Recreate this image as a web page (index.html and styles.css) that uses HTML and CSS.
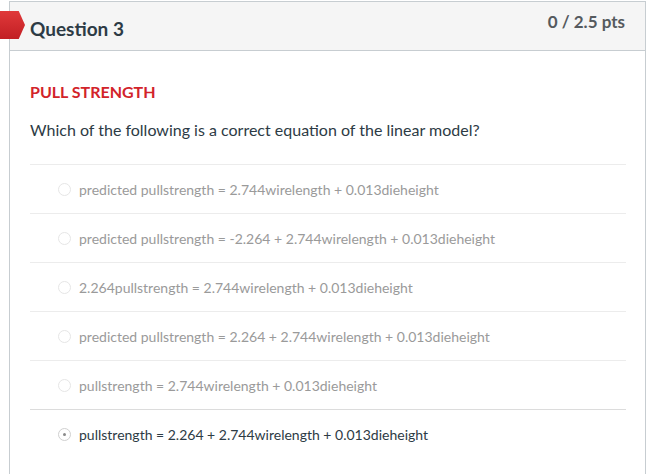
FILE: index.html
```html
<!DOCTYPE html>
<html lang="en">
<head>
<meta charset="utf-8">
<title>Question 3</title>
<link rel="stylesheet" href="styles.css">
</head>
<body>
<div class="card">
  <div class="header">
    <span class="flag"></span>
    <h2 class="title">Question 3</h2>
    <div class="pts">0 / 2.5 pts</div>
  </div>
  <div class="content">
    <p class="label">PULL STRENGTH</p>
    <p class="question">Which of the following is a correct equation of the linear model?</p>
    <ul class="answers">
      <li class="answer"><span class="radio"></span><span class="text">predicted pullstrength = 2.744wirelength + 0.013dieheight</span></li>
      <li class="answer"><span class="radio"></span><span class="text">predicted pullstrength = -2.264 + 2.744wirelength + 0.013dieheight</span></li>
      <li class="answer"><span class="radio"></span><span class="text">2.264pullstrength = 2.744wirelength + 0.013dieheight</span></li>
      <li class="answer"><span class="radio"></span><span class="text">predicted pullstrength = 2.264 + 2.744wirelength + 0.013dieheight</span></li>
      <li class="answer"><span class="radio"></span><span class="text">pullstrength = 2.744wirelength + 0.013dieheight</span></li>
      <li class="answer selected"><span class="radio"></span><span class="text">pullstrength = 2.264 + 2.744wirelength + 0.013dieheight</span></li>
    </ul>
  </div>
</div>
</body>
</html>
```

FILE: styles.css
```css
html, body {
  margin: 0;
  padding: 0;
  background: #ffffff;
}

body {
  font-family: Lato, "Open Sans", "Liberation Sans", sans-serif;
  color: #2d3b45;
}

.card {
  margin: 1px 0 0 9px;
  width: 637px;
  box-sizing: border-box;
  border: 1px solid #c7cdd1;
  border-bottom: none;
  min-height: 473px;
  position: relative;
}

.header {
  position: relative;
  display: flex;
  align-items: center;
  justify-content: space-between;
  height: 48px;
  padding: 0 20px 0 20px;
  background: #f5f5f5;
  border-bottom: 1px solid #c7cdd1;
}

.flag {
  position: absolute;
  left: -10px;
  top: 9px;
  width: 25px;
  height: 28px;
  background: linear-gradient(#e0393a, #c21f24);
  clip-path: polygon(0 0, 75% 0, 100% 50%, 75% 100%, 0 100%);
}

.title {
  margin: 0;
  font-size: 19px;
  font-weight: 700;
  color: #2d3b45;
  padding-top: 4px;
}

.pts {
  font-size: 17px;
  font-weight: 700;
  color: #555a5e;
  margin-top: -10px;
}

.content {
  padding: 30px 19px 0 20px;
}

.label {
  margin: 0;
  font-size: 16px;
  line-height: 22px;
  font-weight: 700;
  color: #d2232a;
}

.question {
  margin: 15px 0 0 0;
  font-size: 16px;
  line-height: 24px;
  color: #2d3b45;
}

.answers {
  list-style: none;
  margin: 22px 0 0 0;
  padding: 0;
}

.answer {
  display: flex;
  align-items: center;
  height: 48px;
  border-top: 1px solid #ececec;
  padding-left: 28px;
  font-size: 14px;
  color: #9a9a9a;
}

.answer.selected {
  color: #2d3b45;
  border-top-color: #dcdcdc;
}

.radio {
  width: 13px;
  height: 13px;
  border: 1px solid #e6e6e6;
  border-radius: 50%;
  margin-right: 8px;
  box-sizing: border-box;
  display: flex;
  align-items: center;
  justify-content: center;
  background: #ffffff;
}

.selected .radio {
  border-color: #d0d0d0;
}

.selected .radio::after {
  content: "";
  width: 3px;
  height: 3px;
  border-radius: 50%;
  background: #8a8a8a;
}
```
